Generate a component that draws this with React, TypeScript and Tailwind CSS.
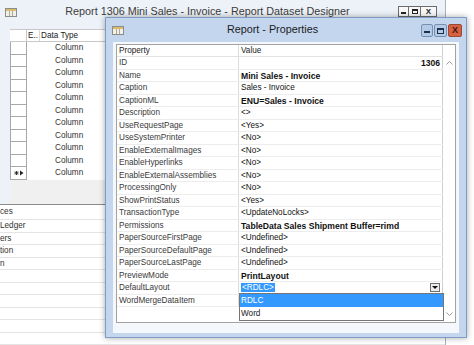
import React from 'react';

interface PropRow {
  name: string;
  value: string;
  bold?: boolean;
  right?: boolean;
  dropdown?: boolean;
}

const propRows: PropRow[] = [
  { name: 'ID', value: '1306', bold: true, right: true },
  { name: 'Name', value: 'Mini Sales - Invoice', bold: true },
  { name: 'Caption', value: 'Sales - Invoice' },
  { name: 'CaptionML', value: 'ENU=Sales - Invoice', bold: true },
  { name: 'Description', value: '<>' },
  { name: 'UseRequestPage', value: '<Yes>' },
  { name: 'UseSystemPrinter', value: '<No>' },
  { name: 'EnableExternalImages', value: '<No>' },
  { name: 'EnableHyperlinks', value: '<No>' },
  { name: 'EnableExternalAssemblies', value: '<No>' },
  { name: 'ProcessingOnly', value: '<No>' },
  { name: 'ShowPrintStatus', value: '<Yes>' },
  { name: 'TransactionType', value: '<UpdateNoLocks>' },
  { name: 'Permissions', value: 'TableData Sales Shipment Buffer=rimd', bold: true },
  { name: 'PaperSourceFirstPage', value: '<Undefined>' },
  { name: 'PaperSourceDefaultPage', value: '<Undefined>' },
  { name: 'PaperSourceLastPage', value: '<Undefined>' },
  { name: 'PreviewMode', value: 'PrintLayout', bold: true },
  { name: 'DefaultLayout', value: '<RDLC>', dropdown: true },
  { name: 'WordMergeDataItem', value: '' },
];

const listItems = ['ces', 'Ledger', 'ers', 'tion', 'n', '', '', '', '', '', ''];

function WinIcon() {
  return (
    <svg width="12" height="9" viewBox="0 0 12 9">
      <rect x="0.5" y="0.5" width="11" height="8" fill="#f3f0e4" stroke="#8c8c8c" />
      <rect x="1" y="1" width="10" height="2" fill="#d9bd6a" />
      <line x1="4.5" y1="3" x2="4.5" y2="8" stroke="#a8a8a8" />
      <line x1="7.5" y1="3" x2="7.5" y2="8" stroke="#a8a8a8" />
    </svg>
  );
}

function Chevron({ up }: { up?: boolean }) {
  return (
    <svg width="7" height="4" viewBox="0 0 7 4">
      <polyline
        points={up ? '0.5,3.5 3.5,0.5 6.5,3.5' : '0.5,0.5 3.5,3.5 6.5,0.5'}
        fill="none"
        stroke="#9a9a9a"
        strokeWidth="1"
      />
    </svg>
  );
}

function NewRowMark() {
  return (
    <svg width="10" height="6" viewBox="0 0 10 6">
      <path d="M0.5 3h4M2.5 1v4M1 1.5l3 3M4 1.5l-3 3" stroke="#222" strokeWidth="0.9" />
      <path d="M6 0.5l3.5 2.5L6 5.5z" fill="#222" />
    </svg>
  );
}

export default function App() {
  return (
    <div className="relative w-[474px] h-[345px] overflow-hidden bg-[#f4f4f4] flex font-['Liberation_Sans',Arial,sans-serif] text-[8.2px] text-[#333]">
      {/* back window: report dataset designer */}
      <div className="w-[446px] h-full flex flex-col border-r border-[#a7b3c2] bg-[#edf2f8]">
        <div className="h-[24px] flex items-center pl-[5px] pr-[8px]">
          <WinIcon />
          <div className="flex-1 text-center text-[10.8px] text-[#3c3c3c] pb-[1px]">
            Report 1306 Mini Sales - Invoice - Report Dataset Designer
          </div>
          <div className="flex -mt-[1px]">
            <div className="w-[11px] h-[11px] border border-[#6c6c6c] bg-[#f8f8f8] flex items-end justify-center pb-[2px]">
              <div className="w-[5px] h-[2px] bg-[#222]" />
            </div>
            <div className="w-[12px] h-[11px] border border-l-0 border-[#6c6c6c] bg-[#f8f8f8] flex items-center justify-center">
              <div className="w-[6px] h-[5px] border border-t-2 border-[#222]" />
            </div>
            <div className="w-[16px] h-[11px] border border-l-0 border-[#6c6c6c] bg-[#f8f8f8] flex items-center justify-center text-[8px] font-bold leading-none text-[#222]">
              X
            </div>
          </div>
        </div>

        <div className="h-[180px] pl-[10px] pt-[5px] flex flex-col">
          <div className="flex-1 bg-[#f0f0f0] flex flex-col">
            <div className="h-[13px] flex bg-white border-t border-b border-[#c8c8c8] leading-[11px]">
              <div className="w-[17px] border-r border-[#c8c8c8]" />
              <div className="w-[13px] border-r border-[#d8d8d8] pl-[1px] text-[#222]">E..</div>
              <div className="flex-1 pl-[1px] text-[#222]">Data Type</div>
            </div>
            {Array.from({ length: 11 }, (_, i) => (
              <div key={i} className="h-[12.5px] flex bg-white leading-[12px]">
                <div className="w-[17px] border border-t-0 border-[#a8a8a8] flex items-center justify-center">
                  {i === 10 && <NewRowMark />}
                </div>
                <div className="w-[13px]" />
                <div className="flex-1 pl-[15px] text-[#333]">Column</div>
              </div>
            ))}
          </div>
        </div>

        <div className="flex-1 bg-white border-t border-[#8a8a8a] flex flex-col">
          <div className="h-[15px] border-b border-[#e4e4e4] leading-[12px] pt-[1px] shrink-0">{listItems[0]}</div>
          {listItems.slice(1).map((t, i) => (
            <div key={i} className="h-[12.5px] border-b border-[#e4e4e4] leading-[12px] shrink-0">
              {t}
            </div>
          ))}
        </div>
      </div>
      <div className="flex-1 bg-white" />

      {/* front window: report properties */}
      <div className="absolute left-[105px] top-[17px] w-[362px] h-[321px] border border-[#7f9cc3] bg-[#c3d6ee] flex flex-col shadow-[0_0_6px_rgba(0,0,0,0.35)]">
        <div className="h-[24px] flex items-center pl-[6px] pr-[4px]">
          <WinIcon />
          <div className="flex-1 text-center text-[10.8px] text-[#1c1c1c] pb-[1px]">Report - Properties</div>
          <div className="flex gap-[1px] self-start mt-[6px]">
            <div className="w-[12px] h-[13px] border border-[#7890b0] bg-[#b4cbe8] rounded-[2px] flex items-end justify-center pb-[3px]">
              <div className="w-[6px] h-[2px] bg-[#1f2f47]" />
            </div>
            <div className="w-[13px] h-[13px] border border-[#7890b0] bg-[#b4cbe8] rounded-[2px] flex items-center justify-center">
              <div className="w-[7px] h-[6px] border border-t-2 border-[#1f2f47]" />
            </div>
            <div className="w-[14px] h-[13px] border border-[#9a4a38] bg-[#d6603f] rounded-[2px] flex items-center justify-center text-[9px] font-bold leading-none text-[#3a1a12]">
              X
            </div>
          </div>
        </div>

        <div className="flex-1 mx-[7px] bg-[#f4f7fb] px-[3px] pt-[2px]">
          <div className="h-[279px] border border-[#a3a3a3] bg-white flex">
            <div className="flex-1 flex flex-col">
              <div className="h-[12px] flex border-b border-[#e2e2e2] leading-[12px] text-[#222]">
                <div className="w-[122px] border-r border-[#dcdcdc] pl-[2px]">Property</div>
                <div className="flex-1 pl-[2px] border-r border-[#cfcfcf]">Value</div>
              </div>
              {propRows.map((r) => (
                <div key={r.name} className="h-[12.5px] flex border-b border-[#ededed] leading-[12px]">
                  <div className="w-[122px] border-r border-[#dcdcdc] pl-[2px] text-[#3a3a3a] whitespace-nowrap">
                    {r.name}
                  </div>
                  <div
                    className={`relative flex-1 px-[2px] border-r border-[#cfcfcf] whitespace-nowrap text-[#111] ${
                      r.bold ? 'font-bold text-[8.6px]' : ''
                    } ${r.right ? 'text-right' : ''}`}
                  >
                    {r.dropdown ? (
                      <>
                        <div className="flex items-center h-full">
                          <span className="bg-[#3399ff] text-white leading-[9px] px-[1px]">{r.value}</span>
                          <div className="ml-auto w-[10px] h-[9px] border border-[#6e6e6e] bg-[#ececec] flex items-center justify-center">
                            <div className="w-0 h-0 border-l-[3px] border-r-[3px] border-t-[3px] border-l-transparent border-r-transparent border-t-[#111]" />
                          </div>
                        </div>
                        <div className="absolute left-0 top-[11px] w-[205px] z-10 border border-[#767676] bg-white flex flex-col">
                          <div className="h-[13px] bg-[#3399ff] text-white leading-[13px] pl-[1px]">RDLC</div>
                          <div className="h-[13px] leading-[13px] pl-[1px] text-[#222]">Word</div>
                        </div>
                      </>
                    ) : (
                      r.value
                    )}
                  </div>
                </div>
              ))}
            </div>
            <div className="w-[12px] flex flex-col items-center bg-white">
              <div className="h-[12px]" />
              <div className="h-[12px] flex items-center justify-center">
                <Chevron up />
              </div>
              <div className="flex-1" />
              <div className="h-[12px] flex items-center justify-center mb-[2px]">
                <Chevron />
              </div>
            </div>
          </div>
        </div>
        <div className="h-[4px]" />
      </div>
    </div>
  );
}
